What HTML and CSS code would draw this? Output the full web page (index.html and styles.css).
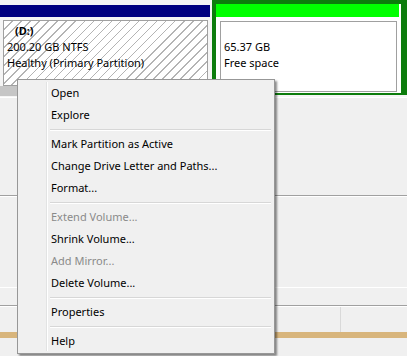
FILE: index.html
```html
<!DOCTYPE html>
<html lang="en">
<head>
  <meta charset="UTF-8">
  <title>Disk Management</title>
  <link rel="stylesheet" href="styles.css">
</head>
<body>

<div id="disk">
  <div class="part part-d">
    <div class="bar bar-navy"></div>
    <div class="box box-hatch">
      <div class="label">(D:)</div>
      <div>200.20 GB NTFS</div>
      <div>Healthy (Primary Partition)</div>
    </div>
    <div class="foot"></div>
  </div>
  <div class="part part-free">
    <div class="bar bar-lime"></div>
    <div class="box">
      <div>&nbsp;</div>
      <div>65.37 GB</div>
      <div>Free space</div>
    </div>
  </div>
</div>

<div id="upper"></div>
<div id="lower"></div>
<div id="strip"></div>
<div id="legend">
  <div class="cell"></div>
  <div class="cell"></div>
</div>
<div id="tan"></div>

<!-- context menu over the D: partition -->
<div id="menu">
  <div class="item">Open</div>
  <div class="item">Explore</div>
  <div class="sep"></div>
  <div class="item">Mark Partition as Active</div>
  <div class="item">Change Drive Letter and Paths...</div>
  <div class="item">Format...</div>
  <div class="sep"></div>
  <div class="item off">Extend Volume...</div>
  <div class="item">Shrink Volume...</div>
  <div class="item off">Add Mirror...</div>
  <div class="item">Delete Volume...</div>
  <div class="sep"></div>
  <div class="item">Properties</div>
  <div class="sep"></div>
  <div class="item">Help</div>
</div>

</body>
</html>
```

FILE: styles.css
```css
html, body {
  height: 100%;
}

body {
  margin: 0;
  padding: 0;
  background: #f0f0f0;
  font-family: "Noto Sans", "Liberation Sans", sans-serif;
  font-size: 11px;
  color: #000;
}

#disk {
  display: flex;
  height: 97px;
  border-bottom: 1px solid #fff;
  background: #f5f5f5;
}

.part-d {
  width: 210px;
  padding-top: 5px;
}

.bar-navy {
  height: 12px;
  background: #000080;
  margin-bottom: 3px;
}

.box {
  box-sizing: border-box;
  border: 1px solid #a0a0a0;
  background: #fff;
  padding: 1px 3px 0;
  line-height: 16px;
  white-space: nowrap;
}

.box-hatch {
  height: 66px;
  margin: 0 2px 0 3px;
  padding-top: 2px;
  background: repeating-linear-gradient(135deg, #fff 0 5.4px, #b4b4b4 5.4px 6.4px);
}

.foot {
  height: 10px;
  background: #c6c6c6;
}

.label {
  padding-left: 8px;
  font-weight: bold;
}

.part-free {
  flex: 1;
  box-sizing: border-box;
  height: 95px;
  margin-left: 2px;
  border: solid #0c7c0c;
  border-width: 4px 6px 2px 4px;
  background: #fff;
}

.bar-lime {
  height: 13px;
  background: #00ff00;
  margin-right: 2px;
}

.part-free .box {
  height: 71px;
  margin: 4px 4px 0 4px;
}

#upper {
  height: 97px;
  border-bottom: 1px solid #a0a0a0;
}

#lower {
  height: 90px;
  border-top: 1px solid #fff;
  border-bottom: 1px solid #fff;
}

#strip {
  height: 17px;
  border-bottom: 1px solid #a0a0a0;
}

#legend {
  display: flex;
  height: 25px;
  border-top: 1px solid #fff;
}

#legend .cell {
  width: 340px;
  border-right: 1px solid #d9d9d9;
}

#legend .cell + .cell {
  flex: 1;
  border-right: none;
}

#tan {
  height: 6px;
  background: #d8b57c;
}

#menu {
  position: absolute;
  left: 17px;
  top: 79px;
  width: 252px;
  padding: 2px 2px 1px;
  border: 1px solid #979797;
  background: #f0f0f0;
  box-shadow: 2px 2px 2px rgba(0, 0, 0, 0.45);
}

/* icon gutter */
#menu::before {
  content: "";
  position: absolute;
  left: 28px;
  top: 2px;
  bottom: 2px;
  width: 1px;
  background: #e2e3e3;
  border-right: 1px solid #fff;
}

.item {
  height: 22px;
  line-height: 22px;
  padding-left: 31px;
  white-space: nowrap;
}

.item.off {
  color: #8a8a8a;
}

.sep {
  height: 1px;
  margin: 3px 1px 2px 30px;
  background: #d7d7d7;
  border-bottom: 1px solid #fff;
}
```
